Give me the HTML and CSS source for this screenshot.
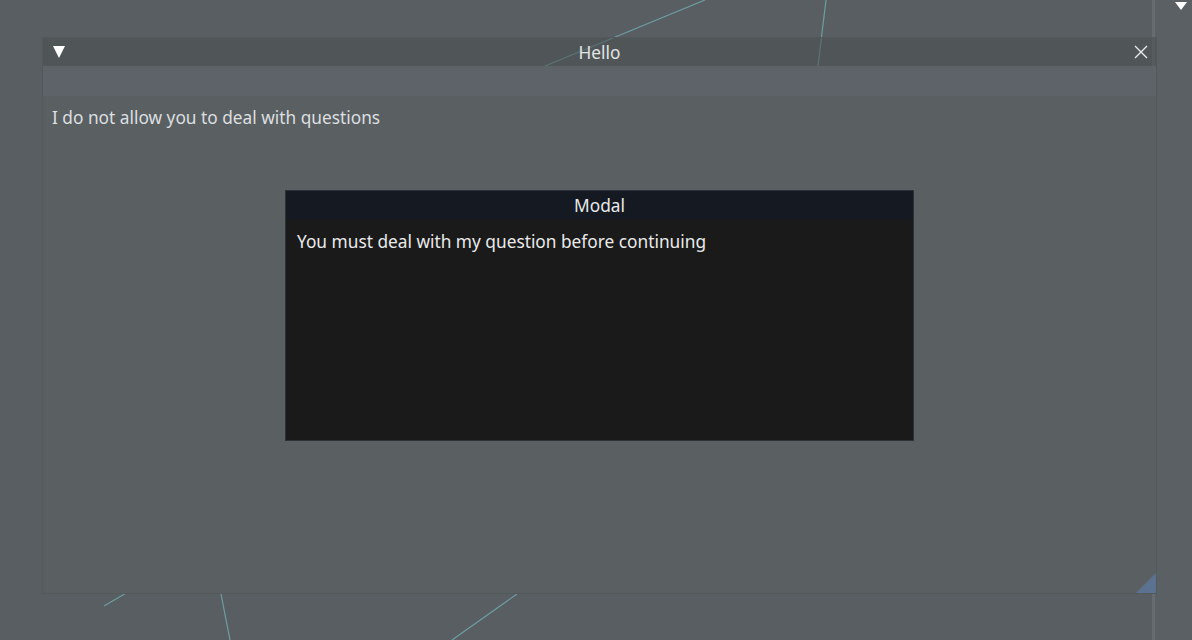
FILE: index.html
```html
<!DOCTYPE html>
<html>
<head>
<meta charset="utf-8">
<link rel="stylesheet" href="styles.css">
</head>
<body>
<div class="desktop">
  <svg class="bg-lines" width="1192" height="640" viewBox="0 0 1192 640">
    <line x1="104" y1="606" x2="140" y2="585"/>
    <line x1="221" y1="594" x2="230" y2="640"/>
    <line x1="517" y1="594" x2="452" y2="640"/>
    <line x1="545" y1="66" x2="705" y2="0"/>
    <line x1="826" y1="0" x2="818" y2="66"/>
  </svg>
  <div class="side-panel">
    <span class="side-arrow"></span>
  </div>
  <div class="window">
    <div class="titlebar">
      <span class="collapse"></span>
      <span class="title">Hello</span>
      <svg class="close" width="14" height="14" viewBox="0 0 14 14"><path d="M1 1 L13 13 M13 1 L1 13"/></svg>
    </div>
    <div class="menubar"></div>
    <div class="content">
      <p class="text">I do not allow you to deal with questions</p>
    </div>
    <div class="modal">
      <div class="modal-title">Modal</div>
      <div class="modal-body">
        <p class="modal-text">You must deal with my question before continuing</p>
      </div>
    </div>
    <span class="grip"></span>
  </div>
</div>
</body>
</html>
```
FILE: styles.css
```css
html, body {
  margin: 0;
  padding: 0;
}
body {
  background: #585e61;
  font-family: "Noto Sans", "DejaVu Sans", sans-serif;
  font-size: 17.3px;
  color: #dfe1e2;
  overflow: hidden;
}
.desktop {
  position: relative;
  width: 1192px;
  height: 640px;
  background: #585e61;
}
.bg-lines {
  position: absolute;
  left: 0;
  top: 0;
}
.bg-lines line {
  stroke: #6e9ea2;
  stroke-width: 1.2;
}
.side-panel {
  position: absolute;
  left: 1152px;
  top: 0;
  width: 37px;
  height: 640px;
  border-left: 3px solid #676c70;
  background: #5a6063;
}
.side-arrow {
  position: absolute;
  left: 20px;
  top: 2px;
  width: 0;
  height: 0;
  border-left: 6px solid transparent;
  border-right: 6px solid transparent;
  border-top: 8px solid #ffffff;
}
.window {
  position: absolute;
  left: 42px;
  top: 37px;
  width: 1113px;
  height: 555px;
  border: 1px solid #53595b;
  display: flex;
  flex-direction: column;
}
.titlebar {
  height: 28px;
  display: flex;
  align-items: center;
  justify-content: center;
  background: rgba(74, 80, 82, 0.55);
  position: relative;
}
.collapse {
  position: absolute;
  left: 10px;
  top: 8px;
  width: 0;
  height: 0;
  border-left: 6.5px solid transparent;
  border-right: 6.5px solid transparent;
  border-top: 12px solid #ffffff;
}
.title {
  color: #e2e4e5;
  line-height: 28px;
  padding-top: 2px;
}
.close {
  position: absolute;
  right: 8px;
  top: 7px;
}
.close path {
  stroke: #e6e8e9;
  stroke-width: 1.4;
  fill: none;
}
.menubar {
  height: 30px;
  background: #5e636a;
}
.content {
  flex: 1;
  background: #5a6062;
  padding: 10px 9px 9px;
}
.text {
  margin: 0;
  line-height: 24px;
  color: #dcdfe0;
}
.modal {
  position: absolute;
  left: 242px;
  top: 152px;
  width: 627px;
  height: 249px;
  border: 1px solid #2b3239;
  display: flex;
  flex-direction: column;
  background: #1a1a1a;
}
.modal-title {
  height: 28px;
  line-height: 28px;
  padding-top: 1px;
  box-sizing: border-box;
  text-align: center;
  background: #151a22;
  color: #e8e9ea;
}
.modal-body {
  flex: 1;
  padding: 10px 11px;
}
.modal-text {
  margin: 0;
  line-height: 26px;
  color: #eaeaea;
}
.grip {
  position: absolute;
  right: 0;
  bottom: 0;
  width: 0;
  height: 0;
  border-left: 20px solid transparent;
  border-bottom: 20px solid #5b7391;
}
```
